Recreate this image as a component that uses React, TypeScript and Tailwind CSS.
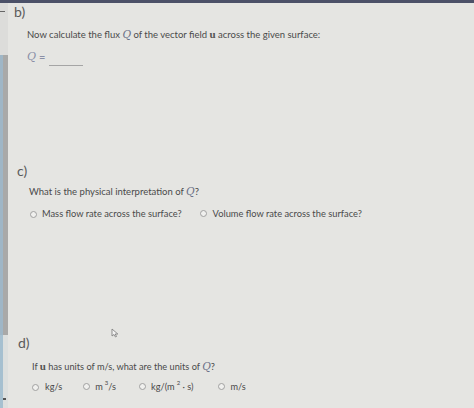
import React from 'react'

const Radio = () => (
  <span className="inline-block w-[7px] h-[7px] rounded-full border border-[#a0a0a0] bg-[#f0f0ee] shrink-0" />
)

const Q = () => <span className="italic font-['DejaVu_Serif',serif] text-[#6a7088] text-[10.5px]">Q</span>
const U = () => <span className="font-bold font-['Liberation_Serif',serif] text-[#555] text-[11px]">u</span>

export default function App() {
  return (
    <div className="w-[474px] h-[408px] bg-[#e5e5e2] flex flex-col overflow-hidden font-['Lato',sans-serif] text-[#4a4a4a]">
      <div className="h-[3px] bg-[#4c5168] shrink-0" />
      <div className="flex flex-1">
        {/* left scrollbar strip */}
        <div className="w-[8px] flex flex-col bg-[#d2d8da]">
          <div className="h-[52px] bg-[#dcdcda] relative">
            <span className="absolute left-[0px] top-[8px] w-[5px] h-px bg-[#666]" />
          </div>
          <div className="h-[280px] flex">
            <div className="w-[3px] bg-[#9fb6c6]" />
            <div className="flex-1 bg-[#a9a9a8]" />
          </div>
          <div className="flex-1 flex">
            <div className="w-[3px] bg-[#a6c0d0]" />
            <div className="flex-1 bg-[#dcdfde] relative">
              <span className="absolute left-[0px] bottom-[8px] w-[3px] h-[2px] bg-[#555]" />
            </div>
          </div>
        </div>

        <div className="flex-1 flex flex-col pl-[6px]">
          {/* b */}
          <div className="text-[14px] leading-[14px] text-[#5a5a5a] mt-[2px]">b)</div>
          <div className="pl-[13px] mt-[10px] text-[9.5px] leading-[10px]">
            Now calculate the flux <Q /> of the vector field <U /> across the given surface:
          </div>
          <div className="pl-[13px] mt-[11px] flex items-start h-[15px] text-[#8a8fa6]">
            <span className="italic font-['DejaVu_Serif',serif] text-[11px] leading-[12px]">Q</span>
            <span className="text-[11px] leading-[12px] ml-[3px]">=</span>
            <span className="w-[34px] h-[15px] border-b border-[#a5a5a5] ml-[4px]" />
          </div>

          {/* c */}
          <div className="text-[14px] leading-[14px] text-[#5a5a5a] mt-[98px] pl-[3px]">c)</div>
          <div className="pl-[15px] mt-[8px] text-[9.5px] leading-[10px]">
            What is the physical interpretation of <Q />?
          </div>
          <div className="pl-[16px] mt-[12px] flex items-center text-[9.3px] leading-[10px]">
            <Radio />
            <span className="ml-[5px]">Mass flow rate across the surface?</span>
            <span className="ml-[18px]"><Radio /></span>
            <span className="ml-[6px]">Volume flow rate across the surface?</span>
          </div>

          {/* d */}
          <div className="text-[14px] leading-[14px] text-[#5a5a5a] mt-[117px] pl-[4px]">d)</div>
          <div className="pl-[18px] mt-[11px] text-[9.2px] leading-[10px]">
            If <U /> has units of m/s, what are the units of <Q />?
          </div>
          <div className="pl-[18px] mt-[10px] flex items-center text-[9.2px] leading-[10px]">
            <Radio />
            <span className="ml-[6px]">kg/s</span>
            <span className="ml-[21px]"><Radio /></span>
            <span className="ml-[5px]">m<sup className="text-[6px] ml-[2px] -top-[5px]">3</sup>/s</span>
            <span className="ml-[23px]"><Radio /></span>
            <span className="ml-[5px]">kg/(m<sup className="text-[6px] ml-[2px] -top-[5px]">2</sup> · s)</span>
            <span className="ml-[25px]"><Radio /></span>
            <span className="ml-[5px]">m/s</span>
          </div>

          {/* cursor */}
          <div className="relative">
            <svg className="absolute left-[97px] top-[-64px]" width="8" height="10" viewBox="0 0 8 10">
              <path d="M1 1 L1 8 L3 6.5 L4.5 9 L5.5 8.5 L4.2 6 L6.8 6 Z" fill="#f4f4f4" stroke="#777" strokeWidth="0.8" />
            </svg>
          </div>
        </div>
      </div>
    </div>
  )
}
